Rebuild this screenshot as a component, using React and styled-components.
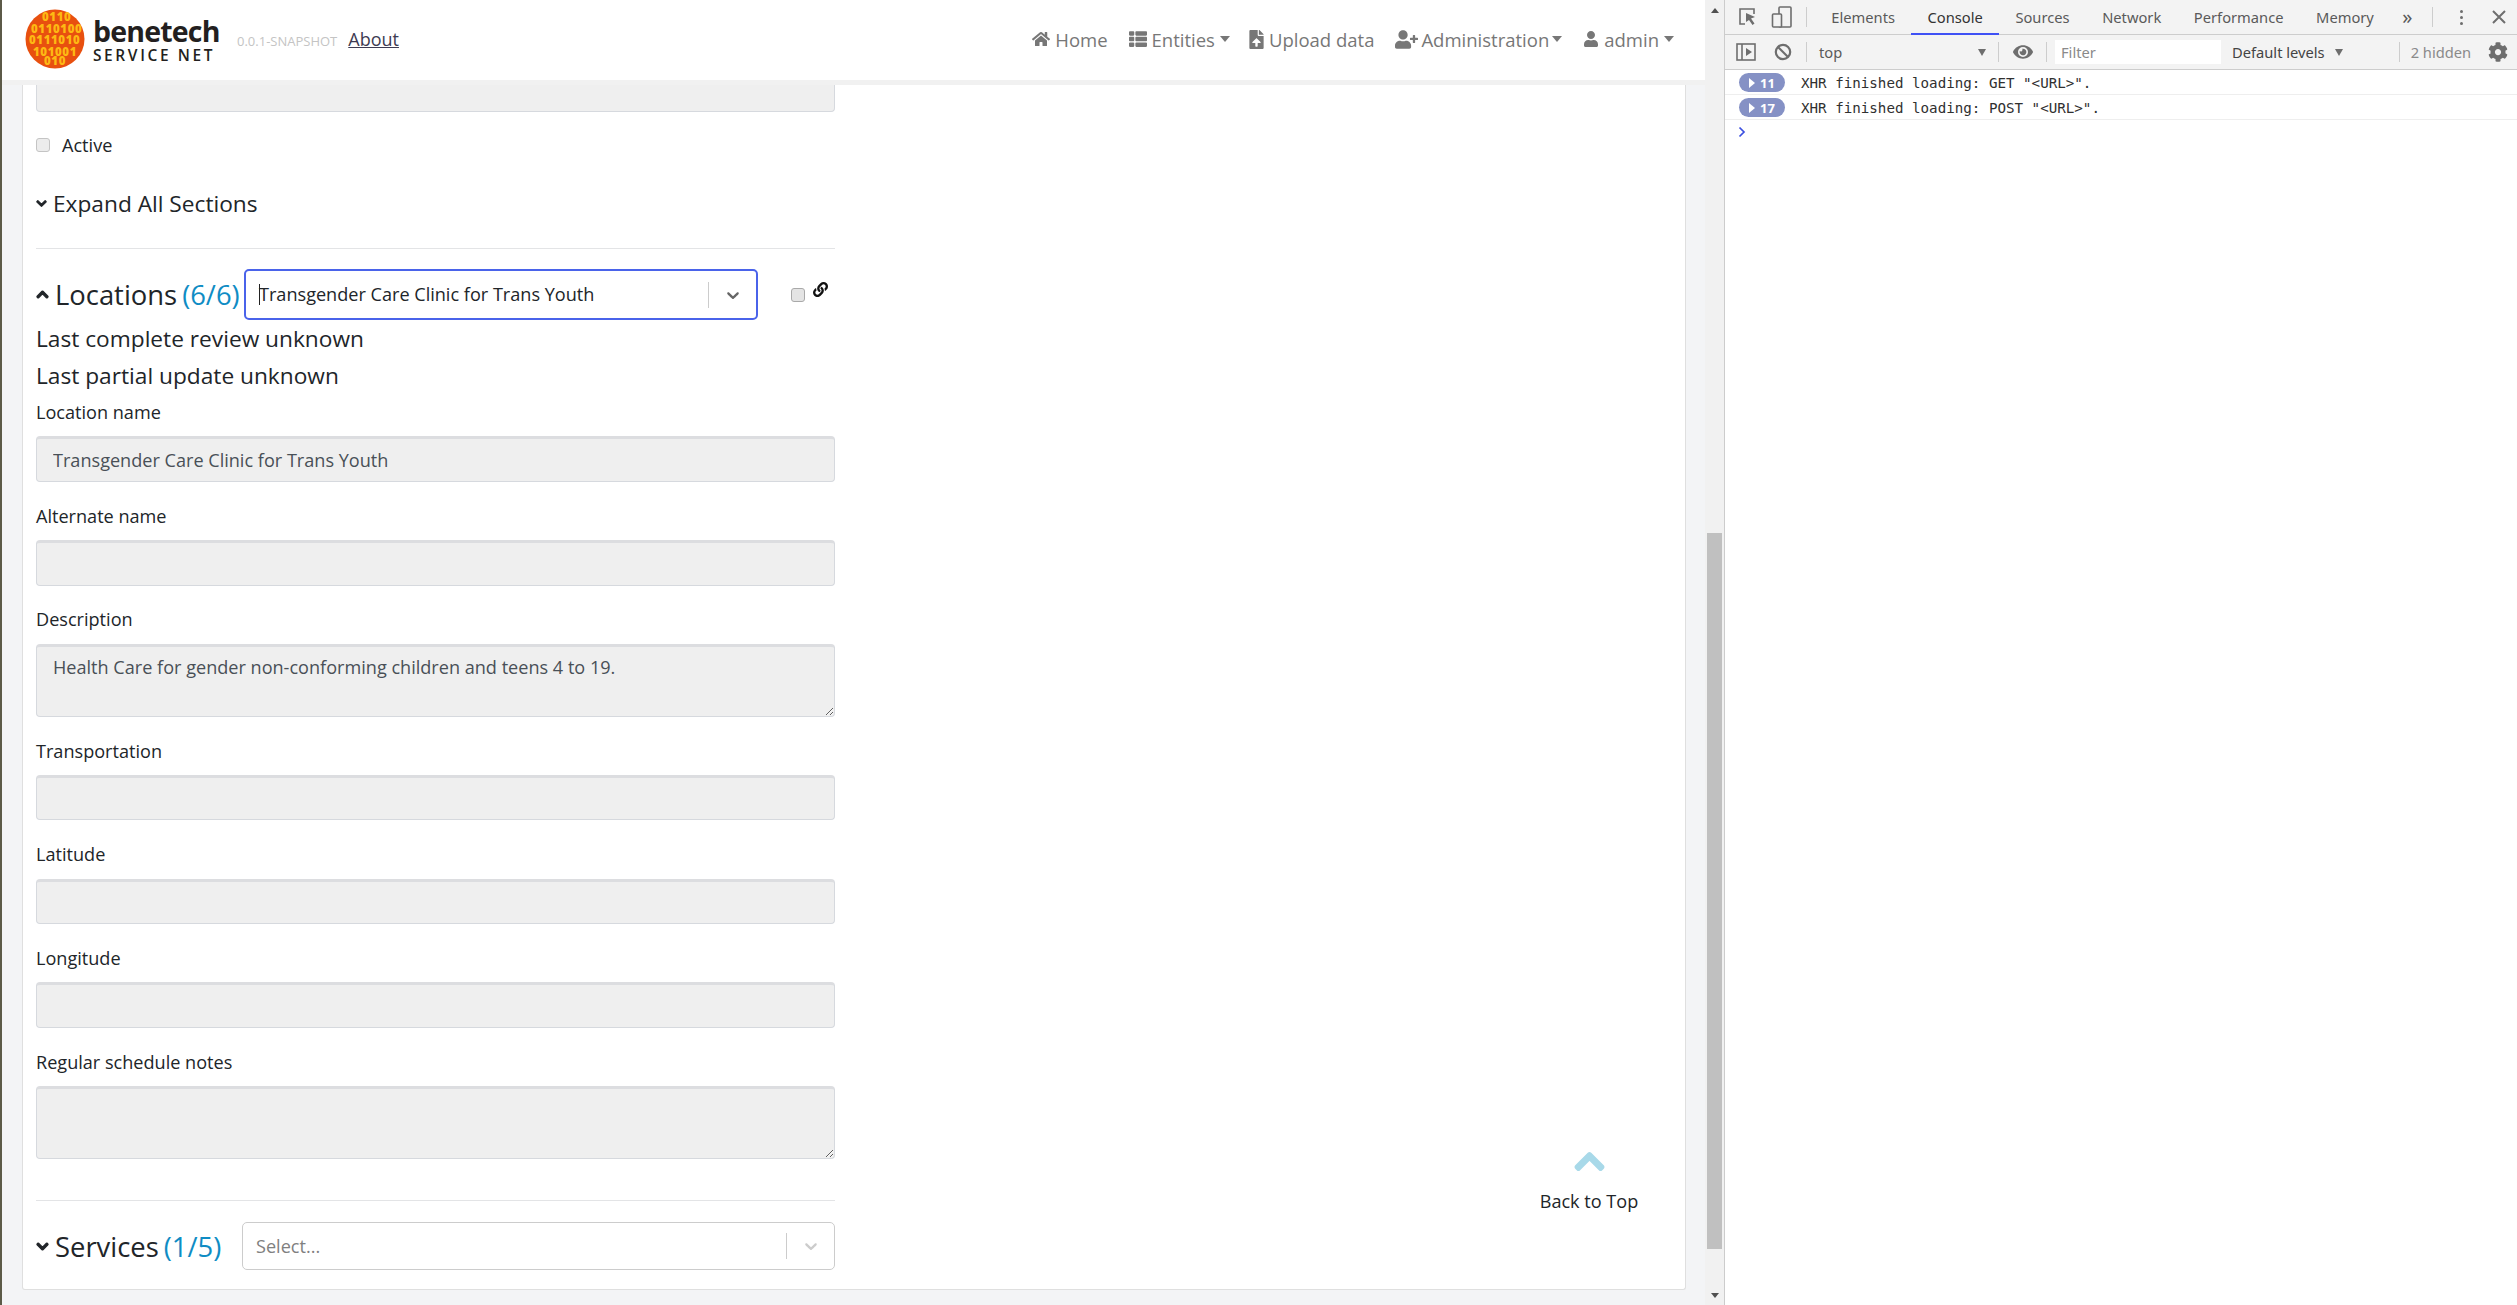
import React from 'react';
import styled, { createGlobalStyle } from 'styled-components';
import {
    FaChevronDown,
    FaChevronUp,
    FaCog,
    FaEye,
    FaFileUpload,
    FaHome,
    FaLink,
    FaThList,
    FaUser,
    FaUserPlus,
} from 'react-icons/fa';

const GlobalStyle = createGlobalStyle`
    html, body {
        margin: 0;
        padding: 0;
        height: 100%;
        overflow: hidden;
        background: #fff;
    }
    * {
        box-sizing: border-box;
    }
`;

const navItems = [
    { label: 'Home', icon: <FaHome size={18} />, gap: 5 },
    { label: 'Entities', icon: <FaThList size={18} />, gap: 5, caret: true, after: -4 },
    { label: 'Upload data', icon: <FaFileUpload size={19} />, gap: 3 },
    { label: 'Administration', icon: <FaUserPlus size={23} />, gap: 3, caret: true },
    { label: 'admin', icon: <FaUser size={16} />, gap: 5, caret: true },
];

const fields = [
    { label: 'Location name', value: 'Transgender Care Clinic for Trans Youth' },
    { label: 'Alternate name', value: '' },
    { label: 'Description', value: 'Health Care for gender non-conforming children and teens 4 to 19.', area: true },
    { label: 'Transportation', value: '' },
    { label: 'Latitude', value: '' },
    { label: 'Longitude', value: '' },
    { label: 'Regular schedule notes', value: '', area: true },
];

const tabs = ['Elements', 'Console', 'Sources', 'Network', 'Performance', 'Memory'];

const logs = [
    { count: 11, text: 'XHR finished loading: GET "<URL>".' },
    { count: 17, text: 'XHR finished loading: POST "<URL>".' },
];

const digitRows = [
    { y: 12, x: 17, text: '0110' },
    { y: 23.5, x: 6, text: '0110100' },
    { y: 35, x: 4, text: '0111010' },
    { y: 46.5, x: 8, text: '101001' },
    { y: 56, x: 19, text: '010' },
];

function Logo() {
    return (
        <LogoBox>
            <svg width="60" height="60" viewBox="0 0 60 60">
                <circle cx="30" cy="30" r="29.5" fill="#e8500f" />
                <g fill="#fdb913" fontFamily="'Open Sans', sans-serif" fontWeight="800" fontSize="11.500">
                    {digitRows.map((row) => (
                        <text key={row.y} x={row.x} y={row.y} letterSpacing="0.6">
                            {row.text}
                        </text>
                    ))}
                </g>
            </svg>
            <LogoText>
                <LogoName>benetech</LogoName>
                <LogoSub>SERVICE NET</LogoSub>
            </LogoText>
        </LogoBox>
    );
}

function SelectChevron({ color }) {
    return (
        <svg width="20" height="20" viewBox="0 0 20 20" fill={color}>
            <path d="M4.516 7.548c0.436-0.446 1.043-0.481 1.576 0l3.908 3.747 3.908-3.747c0.533-0.481 1.141-0.446 1.574 0 0.436 0.445 0.408 1.197 0 1.615-0.406 0.418-4.695 4.502-4.695 4.502-0.217 0.223-0.502 0.335-0.787 0.335s-0.57-0.112-0.789-0.335c0 0-4.287-4.084-4.695-4.502s-0.436-1.17 0-1.615z" />
        </svg>
    );
}

function InspectIcon() {
    return (
        <svg width="20" height="22" viewBox="0 0 20 22" fill="none">
            <path d="M7 18H2V3h14v5" stroke="#6e6e6e" strokeWidth="1.6" />
            <path d="M8 7l9 4-4 1.5 3.5 5-2 1.5-3.5-5L8 16z" fill="#6e6e6e" />
        </svg>
    );
}

function DeviceIcon() {
    return (
        <svg width="22" height="22" viewBox="0 0 22 22" fill="none" stroke="#6e6e6e" strokeWidth="1.6">
            <rect x="8" y="1" width="12" height="20" rx="1" />
            <rect x="1.500" y="8" width="9" height="13" rx="1" fill="#f3f3f3" />
        </svg>
    );
}

function SidebarIcon() {
    return (
        <svg width="20" height="20" viewBox="0 0 20 20" fill="none">
            <rect x="1" y="2" width="18" height="16" stroke="#6e6e6e" strokeWidth="1.6" />
            <path d="M6 2v16" stroke="#6e6e6e" strokeWidth="1.6" />
            <path d="M10 6l6 4-6 4z" fill="#6e6e6e" />
        </svg>
    );
}

function BlockIcon() {
    return (
        <svg width="18" height="18" viewBox="0 0 18 18" fill="none" stroke="#6e6e6e" strokeWidth="2.200">
            <circle cx="9" cy="9" r="7.200" />
            <path d="M4 4l10 10" />
        </svg>
    );
}

function App() {
    return (
        <>
            <GlobalStyle />
            <Screen>
                <Strip />
                <Viewport>
                    <Header>
                        <Logo />
                        <Version>0.0.1-SNAPSHOT</Version>
                        <AboutLink>About</AboutLink>
                        <Nav>
                            {navItems.map((item) => (
                                <NavItem key={item.label} $gap={item.gap} $after={item.after || 0}>
                                    {item.icon}
                                    <span>{item.label}</span>
                                    {item.caret && <Caret />}
                                </NavItem>
                            ))}
                        </Nav>
                    </Header>
                    <PageBody>
                        <Card>
                            <CutOffInput />
                            <CheckRow>
                                <CheckBox />
                                <span>Active</span>
                            </CheckRow>
                            <ExpandRow>
                                <ChevronDown size={11} />
                                <span>Expand All Sections</span>
                            </ExpandRow>
                            <Divider />
                            <SectionRow>
                                <SectionTitle>
                                    <ChevronUp size={13} />
                                    <span>Locations</span>
                                    <Count>(6/6)</Count>
                                </SectionTitle>
                                <FocusedSelect>
                                    <SelectValue>
                                        <Cursor />
                                        Transgender Care Clinic for Trans Youth
                                    </SelectValue>
                                    <SelectSep />
                                    <ChevronSlot>
                                        <SelectChevron color="#666" />
                                    </ChevronSlot>
                                </FocusedSelect>
                                <SectionCheck />
                                <LinkIcon>
                                    <FaLink size={15} />
                                </LinkIcon>
                            </SectionRow>
                            <ReviewLine>Last complete review unknown</ReviewLine>
                            <ReviewLine>Last partial update unknown</ReviewLine>
                            <Fields>
                                {fields.map((field) => (
                                    <Field key={field.label}>
                                        <FieldLabel>{field.label}</FieldLabel>
                                        {field.area ? (
                                            <FieldArea disabled defaultValue={field.value} />
                                        ) : (
                                            <FieldInput disabled defaultValue={field.value} />
                                        )}
                                    </Field>
                                ))}
                            </Fields>
                            <BottomDivider />
                            <ServicesRow>
                                <ServicesTitle>
                                    <ChevronDown size={13} />
                                    <span>Services</span>
                                    <Count>(1/5)</Count>
                                </ServicesTitle>
                                <PlainSelect>
                                    <Placeholder>Select...</Placeholder>
                                    <SelectSep />
                                    <ChevronSlot>
                                        <SelectChevron color="#ccc" />
                                    </ChevronSlot>
                                </PlainSelect>
                            </ServicesRow>
                            <BackToTop>
                                <TopChevron size={33} />
                                <span>Back to Top</span>
                            </BackToTop>
                        </Card>
                    </PageBody>
                </Viewport>
                <ScrollTrack>
                    <ScrollArrow $up />
                    <ScrollThumb />
                    <ScrollArrow />
                </ScrollTrack>
                <DevTools>
                    <TabBar>
                        <ToolIcon $left={13}>
                            <InspectIcon />
                        </ToolIcon>
                        <ToolIcon $left={13}>
                            <DeviceIcon />
                        </ToolIcon>
                        <ToolSep $left={13} />
                        <Tabs>
                            {tabs.map((tab) => (
                                <Tab key={tab} $active={tab === 'Console'}>
                                    {tab}
                                </Tab>
                            ))}
                        </Tabs>
                        <MoreTabs>»</MoreTabs>
                        <ToolSep $left={20} />
                        <Kebab>
                            <i />
                            <i />
                            <i />
                        </Kebab>
                        <CloseX>
                            <svg width="14" height="14" viewBox="0 0 14 14" stroke="#6e6e6e" strokeWidth="2">
                                <path d="M1 1l12 12M13 1L1 13" />
                            </svg>
                        </CloseX>
                    </TabBar>
                    <FilterBar>
                        <ToolIcon $left={11}>
                            <SidebarIcon />
                        </ToolIcon>
                        <ToolIcon $left={18}>
                            <BlockIcon />
                        </ToolIcon>
                        <ToolSep $left={14} />
                        <ContextSelect>
                            <span>top</span>
                            <SmallArrow />
                        </ContextSelect>
                        <ToolSep $left={0} />
                        <EyeSlot>
                            <FaEye size={20} />
                        </EyeSlot>
                        <ToolSep $left={0} />
                        <FilterInput>Filter</FilterInput>
                        <Levels>
                            <span>Default levels</span>
                            <SmallArrow />
                        </Levels>
                        <ToolSep $left={56} />
                        <Hidden>2 hidden</Hidden>
                        <GearSlot>
                            <FaCog size={20} />
                        </GearSlot>
                    </FilterBar>
                    {logs.map((log) => (
                        <LogRow key={log.count}>
                            <Badge>
                                <BadgeArrow />
                                {log.count}
                            </Badge>
                            <LogText>{log.text}</LogText>
                        </LogRow>
                    ))}
                    <Prompt>
                        <svg width="8" height="12" viewBox="0 0 8 12" fill="none" stroke="#3b4fe0" strokeWidth="1.700">
                            <path d="M1.500 1.500L6 6l-4.500 4.500" />
                        </svg>
                    </Prompt>
                </DevTools>
            </Screen>
        </>
    );
}

const Screen = styled.div`
    display: flex;
    width: 2517px;
    height: 1305px;
    overflow: hidden;
    background: #fff;
    font-family: 'Open Sans', sans-serif;
    color: #212529;
`;

const Strip = styled.div`
    width: 2px;
    background: #5c5a48;
`;

const Viewport = styled.div`
    display: flex;
    flex-direction: column;
    width: 1703px;
    background: #f3f4f6;
`;

const Header = styled.header`
    display: flex;
    align-items: center;
    height: 85px;
    padding: 0 31px 2px 23px;
    background: #fff;
    border-bottom: 5px solid #f1f1f1;
`;

const LogoBox = styled.div`
    display: flex;
    align-items: center;
    gap: 8px;
`;

const LogoText = styled.div`
    display: flex;
    flex-direction: column;
    width: 124px;
    color: #231f20;
`;

const LogoName = styled.span`
    font-size: 28.5px;
    font-weight: 700;
    line-height: 32px;
    letter-spacing: -0.8px;
`;

const LogoSub = styled.span`
    font-size: 15.5px;
    font-weight: 600;
    line-height: 16px;
    letter-spacing: 2.6px;
    white-space: nowrap;
`;

const Version = styled.span`
    margin: 3px 0 0 20px;
    font-size: 13px;
    color: #c4c4c4;
`;

const AboutLink = styled.a`
    margin-left: 11px;
    font-size: 18px;
    color: #3e3b52;
    text-decoration: underline;
`;

const Nav = styled.nav`
    display: flex;
    align-items: center;
    gap: 21px;
    margin-left: auto;
    color: #777;
    font-size: 18.5px;
`;

const NavItem = styled.div`
    display: flex;
    align-items: center;
    gap: ${(props) => props.$gap}px;
    margin-right: ${(props) => props.$after}px;
`;

const Caret = styled.i`
    width: 0;
    height: 0;
    border-left: 5px solid transparent;
    border-right: 5px solid transparent;
    border-top: 6px solid #777;
`;

const PageBody = styled.main`
    flex: 1;
    padding: 0 19px 15px 20px;
    min-height: 0;
`;

const Card = styled.section`
    position: relative;
    height: 100%;
    padding: 0 13px;
    background: #fff;
    border: 1px solid #dfdfdf;
    border-top: none;
    border-radius: 0 0 3px 3px;
`;

const CutOffInput = styled.div`
    width: 799px;
    height: 27px;
    background: #efefef;
    border: 1px solid #d6d9de;
    border-top: none;
    border-radius: 0 0 4px 4px;
`;

const CheckRow = styled.label`
    display: flex;
    align-items: center;
    gap: 12px;
    height: 24px;
    margin-top: 21px;
    font-size: 18.1px;
`;

const CheckBox = styled.input.attrs({ type: 'checkbox', disabled: true })`
    appearance: none;
    width: 14px;
    height: 14px;
    margin: 0;
    background: #ececec;
    border: 1px solid #c4c4c4;
    border-radius: 3px;
`;

const ExpandRow = styled.div`
    display: flex;
    align-items: center;
    gap: 6px;
    height: 34px;
    margin-top: 29px;
    font-size: 22.7px;
`;

const ChevronDown = styled(FaChevronDown)`
    flex: none;
    stroke: currentColor;
    stroke-width: 50px;
`;

const ChevronUp = styled(FaChevronUp)`
    flex: none;
    stroke: currentColor;
    stroke-width: 50px;
`;

const TopChevron = styled(FaChevronUp)`
    stroke: currentColor;
    stroke-width: 28px;
`;

const Divider = styled.hr`
    width: 799px;
    height: 1px;
    margin: 28px 0 0;
    background: #e3e4e6;
    border: none;
`;

const SectionRow = styled.div`
    display: flex;
    align-items: center;
    width: 799px;
    height: 51px;
    margin-top: 20px;
`;

const SectionTitle = styled.h2`
    display: flex;
    align-items: center;
    gap: 6px;
    width: 208px;
    margin: 0;
    font-size: 27.4px;
    font-weight: 400;
    white-space: nowrap;
`;

const Count = styled.span`
    margin-left: -1px;
    color: #0f8cc4;
`;

const FocusedSelect = styled.div`
    display: flex;
    align-items: center;
    width: 514px;
    height: 51px;
    padding: 0 12px 0 13px;
    border: 2px solid #4a63ea;
    border-radius: 5px;
    font-size: 18.1px;
`;

const SelectValue = styled.div`
    display: flex;
    align-items: center;
    flex: 1;
    margin-top: -1px;
`;

const Cursor = styled.i`
    width: 1px;
    height: 21px;
    margin-right: -1px;
    background: #222;
`;

const SelectSep = styled.span`
    width: 1px;
    height: 26px;
    background: #ccc;
`;

const ChevronSlot = styled.span`
    display: flex;
    margin-left: 14px;
    margin-right: 1px;
`;

const SectionCheck = styled(CheckBox)`
    margin: 0 0 0 33px;
    background: #e4e4e4;
    border-color: #a9a9a9;
`;

const LinkIcon = styled.span`
    position: relative;
    top: -5px;
    display: flex;
    margin-left: 8px;
    color: #111;
`;

const ReviewLine = styled.div`
    height: 37px;
    line-height: 37px;
    font-size: 22.7px;
`;

const Fields = styled.div`
    margin-top: 6px;
`;

const Field = styled.div`
    width: 799px;
    margin-bottom: 21.8px;
`;

const FieldLabel = styled.div`
    height: 24px;
    margin-bottom: 12.4px;
    line-height: 24px;
    font-size: 18.1px;
`;

const FieldInput = styled.input`
    display: block;
    width: 100%;
    height: 45.5px;
    padding: 0 16px;
    background: #efefef;
    border: 1px solid #d6d9de;
    border-top: 3px solid #dcdde0;
    border-radius: 4px;
    font-family: inherit;
    font-size: 18.1px;
    color: #495057;
`;

const FieldArea = styled.textarea`
    display: block;
    width: 100%;
    height: 73px;
    padding: 8px 16px;
    background: #efefef;
    border: 1px solid #d6d9de;
    border-top: 3px solid #dcdde0;
    border-radius: 4px;
    font-family: inherit;
    font-size: 18.1px;
    color: #495057;
    resize: vertical;
`;

const BottomDivider = styled(Divider)`
    margin-top: 41px;
`;

const ServicesRow = styled.div`
    display: flex;
    align-items: center;
    width: 799px;
    height: 48px;
    margin-top: 21px;
`;

const ServicesTitle = styled(SectionTitle)`
    width: 206px;
`;

const PlainSelect = styled.div`
    display: flex;
    align-items: center;
    flex: 1;
    height: 48px;
    padding: 0 12px 0 13px;
    border: 1px solid #ccc;
    border-radius: 5px;
    font-size: 18.1px;
`;

const Placeholder = styled.span`
    flex: 1;
    color: #808080;
`;

const BackToTop = styled.div`
    position: absolute;
    left: 1516px;
    top: 1060px;
    display: flex;
    flex-direction: column;
    align-items: center;
    width: 100px;
    color: #a8d9e9;
    span {
        margin-top: 11px;
        font-size: 18.1px;
        color: #212529;
        white-space: nowrap;
    }
`;

const ScrollTrack = styled.div`
    display: flex;
    flex-direction: column;
    width: 20px;
    padding-left: 2px;
    background: #f1f1f1;
    border-right: 1px solid #ccc;
`;

const ScrollArrow = styled.i`
    height: 56px;
    flex: none;
    position: relative;
    &::after {
        content: '';
        position: absolute;
        left: 4px;
        ${(props) => (props.$up ? 'top: 8px;' : 'bottom: 7px;')}
        border-left: 4.5px solid transparent;
        border-right: 4.5px solid transparent;
        ${(props) => (props.$up ? 'border-bottom: 5px solid #505050;' : 'border-top: 5px solid #505050;')}
    }
`;

const ScrollThumb = styled.div`
    width: 15px;
    height: 716px;
    margin-top: 477px;
    background: #c0c0c0;
`;

const DevTools = styled.aside`
    flex: 1;
    min-width: 0;
    font-family: 'Noto Sans', sans-serif;
    font-size: 14.7px;
    color: #5a5a5a;
`;

const TabBar = styled.div`
    display: flex;
    align-items: center;
    height: 35px;
    background: #f3f3f3;
    border-bottom: 1px solid #cdcdcd;
`;

const FilterBar = styled(TabBar)`
    border-bottom: 1px solid #cdcdcd;
`;

const ToolIcon = styled.span`
    display: flex;
    margin-left: ${(props) => props.$left}px;
`;

const ToolSep = styled.span`
    flex: none;
    width: 1px;
    height: 20px;
    margin-left: ${(props) => props.$left}px;
    background: #cdcdcd;
`;

const Tabs = styled.div`
    display: flex;
    height: 100%;
    margin-left: 8px;
`;

const Tab = styled.div`
    display: flex;
    align-items: center;
    padding: 0 16.3px;
    height: 35px;
    color: ${(props) => (props.$active ? '#333' : '#5a5a5a')};
    border-bottom: 2px solid ${(props) => (props.$active ? '#3f51f5' : 'transparent')};
`;

const MoreTabs = styled.span`
    margin-left: 12px;
    font-size: 20px;
    line-height: 1;
`;

const Kebab = styled.span`
    display: flex;
    flex-direction: column;
    gap: 3px;
    margin-left: 27px;
    i {
        width: 3px;
        height: 3px;
        border-radius: 50%;
        background: #6e6e6e;
    }
`;

const CloseX = styled.span`
    display: flex;
    margin-left: 29px;
`;

const ContextSelect = styled.div`
    display: flex;
    align-items: center;
    justify-content: space-between;
    width: 191px;
    padding: 0 12px;
`;

const SmallArrow = styled.i`
    width: 0;
    height: 0;
    border-left: 4.5px solid transparent;
    border-right: 4.5px solid transparent;
    border-top: 7px solid #6e6e6e;
`;

const EyeSlot = styled.span`
    display: flex;
    justify-content: center;
    width: 47px;
    color: #6e6e6e;
`;

const FilterInput = styled.div`
    width: 166px;
    height: 24px;
    margin-left: 8px;
    padding-left: 6px;
    line-height: 25px;
    background: #fff;
    color: #8a8a8a;
`;

const Levels = styled.div`
    display: flex;
    align-items: center;
    gap: 10px;
    margin-left: 11px;
    color: #444;
`;

const Hidden = styled.span`
    margin-left: 11px;
    color: #8a8a8a;
`;

const GearSlot = styled.span`
    display: flex;
    margin-left: 17px;
    color: #6e6e6e;
`;

const LogRow = styled.div`
    display: flex;
    align-items: center;
    height: 25px;
    padding-left: 14px;
    padding-top: 1px;
    border-bottom: 1px solid #eee;
`;

const Badge = styled.span`
    display: flex;
    align-items: center;
    justify-content: center;
    gap: 5px;
    width: 46px;
    height: 19px;
    background: #8591c5;
    border-radius: 10px;
    color: #fff;
    font-size: 13px;
    font-weight: 700;
`;

const BadgeArrow = styled.i`
    width: 0;
    height: 0;
    border-top: 5px solid transparent;
    border-bottom: 5px solid transparent;
    border-left: 6px solid #fff;
`;

const LogText = styled.span`
    margin-left: 16px;
    font-family: 'DejaVu Sans Mono', monospace;
    font-size: 14.2px;
    color: #303030;
    white-space: pre;
`;

const Prompt = styled.div`
    display: flex;
    padding: 6px 0 0 13px;
`;

export default App;
